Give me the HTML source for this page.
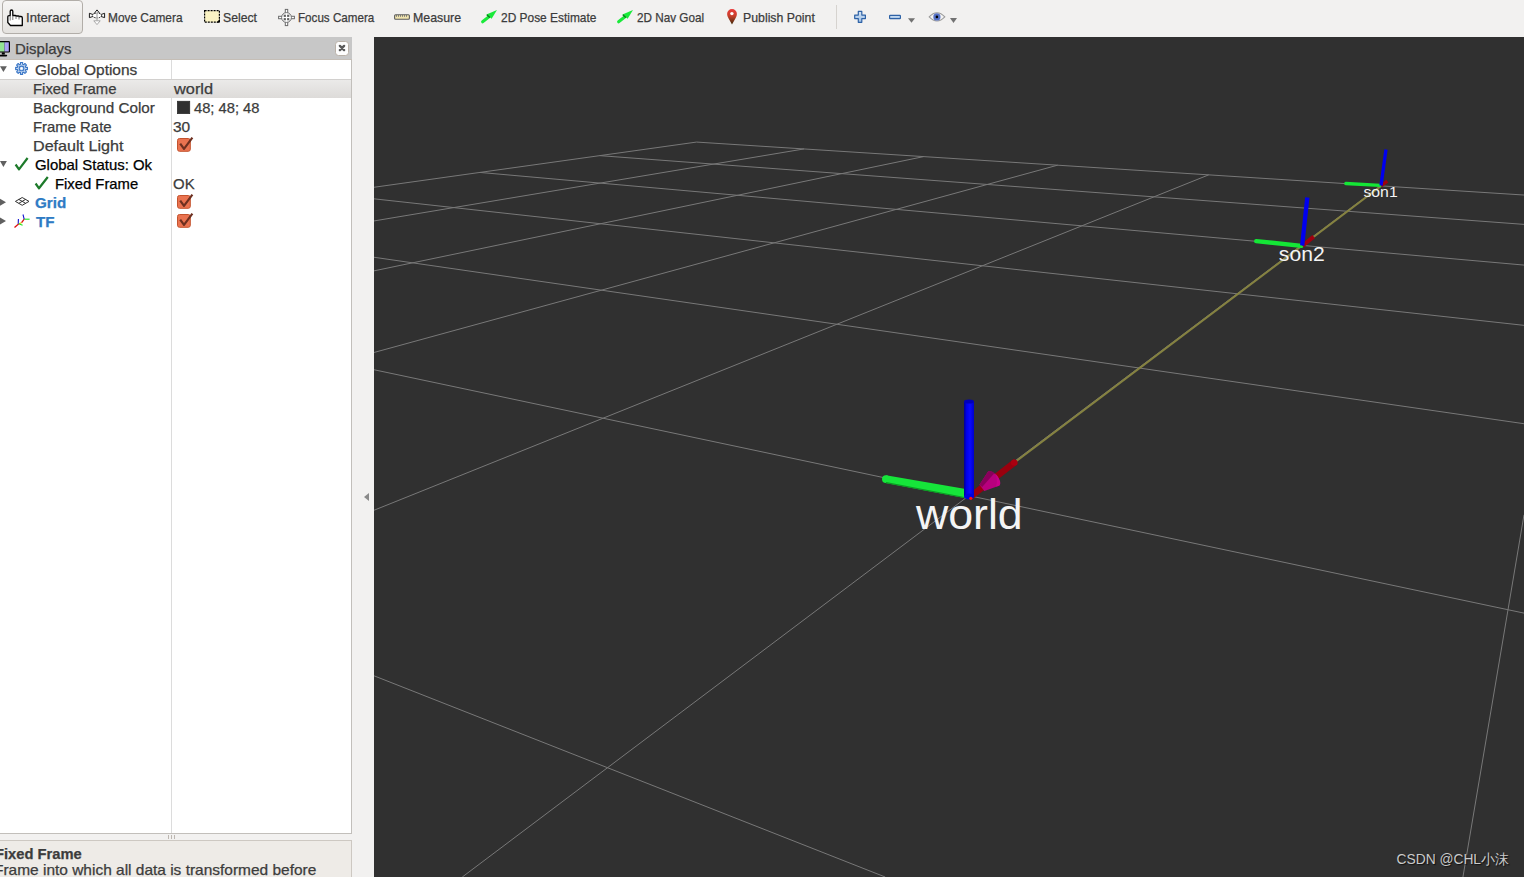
<!DOCTYPE html>
<html><head><meta charset="utf-8"><title>RViz</title>
<style>
*{margin:0;padding:0;box-sizing:border-box}
html,body{width:1524px;height:877px;overflow:hidden;background:#f2f1f0;font-family:"Liberation Sans",sans-serif;position:relative}
.t{position:absolute;white-space:nowrap;transform-origin:0 0;-webkit-text-stroke:0.25px currentColor}
#toolbar{position:absolute;left:0;top:0;width:1524px;height:37px;background:#f2f1f0}
.btn{position:absolute;left:2px;top:0;width:81px;height:34px;border:1px solid #b2aea9;border-radius:4px;background:linear-gradient(#f6f5f4,#e4e2df)}
.sep{position:absolute;left:836px;top:5px;width:1px;height:24px;background:#d6d3cf}
.ic{position:absolute}
#hdr{position:absolute;left:0;top:37px;width:352px;height:23px;background:#c7c7c7;border-bottom:1px solid #c5beb6}
#tree{position:absolute;left:0;top:60px;width:352px;height:774px;background:#fff;border-right:1px solid #c2bfbb;border-bottom:1px solid #c2bfbb}
#colsep{position:absolute;left:171px;top:60px;width:1px;height:773px;background:#dcdcdc}
#selrow{position:absolute;left:0;top:79px;width:351px;height:19px;background:linear-gradient(#ebeae9,#dddbd9);border-top:1px solid #d2d0ce}
#desc{position:absolute;left:-2px;top:840px;width:354px;height:40px;background:#eeebe7;border:1px solid #cdc8c2}
#split{position:absolute;left:364px;top:493px;width:0;height:0;border-top:4px solid transparent;border-bottom:4px solid transparent;border-right:5px solid #8a8a8a}
#view{position:absolute;left:374px;top:37px;width:1150px;height:840px;background:#303030;overflow:hidden}
#view svg{position:absolute;left:0;top:0}
</style></head><body>

<div id="toolbar">
<div class="btn"></div>
<svg class="ic" style="left:0;top:0" width="980" height="37" viewBox="0 0 980 37">
<defs>
<linearGradient id="pin" x1="0" x2="0" y1="0" y2="1"><stop offset="0" stop-color="#ea3a3a"/><stop offset="0.45" stop-color="#c8402c"/><stop offset="1" stop-color="#3e2808"/></linearGradient>
<linearGradient id="plusg" x1="0" x2="0" y1="0" y2="1"><stop offset="0" stop-color="#d6e6f6"/><stop offset="1" stop-color="#9ebfe4"/></linearGradient>
</defs>
<!-- hand -->
<path d="M10.5,25.5 L7.8,22.5 L7.8,16.8 Q7.8,15.6 9,15.6 L10.2,15.6 L10.2,11.2 Q10.2,10 11.6,10 Q12.8,10 12.8,11.2 L12.8,15.5 L15,15.5 Q16,15.5 16,16 L18.2,16 Q19,16 19,16.5 L21,16.5 Q22.3,16.5 22.3,17.8 L22.3,25.5 Z" fill="#fff" stroke="#000" stroke-width="1.3" stroke-linejoin="round"/>
<path d="M12.8,15.5 L12.8,20 M16,16 L16,19 M19,16.5 L19,19.5 M10.2,15.6 L10.2,20.5" stroke="#555" stroke-width="0.8"/>
<!-- move camera -->
<g stroke="#000" stroke-width="0.9" fill="#fff" stroke-linejoin="round">
<path d="M89.4,13.3 L93.2,14.6 L93.2,16.4 L89.4,17.6 Z"/>
<path d="M104.6,13.3 L100.8,14.6 L100.8,16.4 L104.6,17.6 Z"/>
<path d="M97,9.9 L100.2,14 L93.8,14 Z"/>
</g>
<ellipse cx="97" cy="15.5" rx="4.6" ry="2.4" fill="#fff" stroke="#000" stroke-width="0.9" stroke-dasharray="1.4 0.9"/>
<rect x="96.3" y="12.8" width="1.4" height="8" fill="#b4b4b4"/>
<path d="M93.8,20.8 L97,24.6 L100.2,20.8 Z" fill="#fff" stroke="#a0a0a0" stroke-width="0.9"/>
<!-- select -->
<rect x="204.6" y="10.6" width="14.8" height="11.6" fill="#fbf3c4" stroke="#000" stroke-width="1.2" stroke-dasharray="2 1"/>
<path d="M216.5,22.6 L220,19 L220,22.6 Z" fill="#000"/>
<!-- focus camera -->
<g fill="#fff" stroke="#6c6c6c" stroke-width="1">
<rect x="285.3" y="9.4" width="2.4" height="4.4"/>
<rect x="285.3" y="21.2" width="2.4" height="4.4"/>
<rect x="278.6" y="16.3" width="4.4" height="2.4"/>
<rect x="290" y="16.3" width="4.4" height="2.4"/>
<circle cx="286.5" cy="17.5" r="4.9"/>
</g>
<g fill="#606060"><rect x="283.7" y="14.7" width="2.2" height="2.2"/><rect x="287.1" y="14.7" width="2.2" height="2.2"/><rect x="283.7" y="18.1" width="2.2" height="2.2"/><rect x="287.1" y="18.1" width="2.2" height="2.2"/></g>
<!-- measure -->
<rect x="394.6" y="14.7" width="14.8" height="4.6" rx="1" fill="#f0e4ae" stroke="#5c5c5c" stroke-width="1.1"/>
<path d="M396.5,15 V16.8 M398.5,15 V16.8 M400.5,15 V16.8 M402.5,15 V16.8 M404.5,15 V16.8 M406.5,15 V16.8" stroke="#707070" stroke-width="0.9"/>
<!-- 2D pose / nav arrows -->
<g id="arr">
<line x1="482.6" y1="21.8" x2="489" y2="16.8" stroke="#1aea3a" stroke-width="3" stroke-linecap="round"/>
<path d="M486.4,14.4 L491.6,18.8 L497,10.1 Z" fill="#1aea3a"/>
<path d="M486.8,14.8 L489.8,17.6" stroke="#0b7a1c" stroke-width="1.3"/>
</g>
<use href="#arr" x="136"/>
<!-- publish point -->
<path d="M732,24.4 L728.6,18.6 Q727.1,16.6 727.1,14 A4.9,4.9 0 0 1 736.9,14 Q736.9,16.6 735.4,18.6 Z" fill="url(#pin)"/>
<circle cx="731.9" cy="13.6" r="1.7" fill="#fff"/>
<!-- separator handled by css -->
<!-- plus -->
<path d="M858.3,11.4 L861.8,11.4 L861.8,15.1 L865.4,15.1 L865.4,18.6 L861.8,18.6 L861.8,22.3 L858.3,22.3 L858.3,18.6 L854.7,18.6 L854.7,15.1 L858.3,15.1 Z" fill="url(#plusg)" stroke="#2e62a6" stroke-width="1.2" stroke-linejoin="round"/>
<!-- minus -->
<rect x="889.6" y="15.4" width="10.8" height="3.2" rx="0.6" fill="url(#plusg)" stroke="#2e62a6" stroke-width="1.2"/>
<path d="M908,18.2 L915,18.2 L911.5,22.8 Z" fill="#727272"/>
<!-- eye -->
<path d="M929.2,16.9 Q937,8.6 944.8,16.9 Q937,25 929.2,16.9 Z" fill="#f4f4f4" stroke="#9a9a9a" stroke-width="1.1"/>
<circle cx="936.9" cy="16.9" r="3.6" fill="#5470c4"/>
<circle cx="936.9" cy="16.9" r="1.3" fill="#000"/>
<path d="M950,18.1 L957,18.1 L953.5,22.9 Z" fill="#727272"/>
</svg>

<span class="t" style="left:26.02px;top:10.06px;font-size:12.8px;line-height:15px;color:#3c3c3c;transform:scaleX(1.0215);">Interact</span>
<span class="t" style="left:108.45px;top:10.06px;font-size:12.8px;line-height:15px;color:#3c3c3c;transform:scaleX(0.9274);">Move Camera</span>
<span class="t" style="left:223.45px;top:10.06px;font-size:12.8px;line-height:15px;color:#3c3c3c;transform:scaleX(0.9547);">Select</span>
<span class="t" style="left:298.07px;top:10.06px;font-size:12.8px;line-height:15px;color:#3c3c3c;transform:scaleX(0.9085);">Focus Camera</span>
<span class="t" style="left:413.01px;top:10.06px;font-size:12.8px;line-height:15px;color:#3c3c3c;transform:scaleX(0.9649);">Measure</span>
<span class="t" style="left:500.60px;top:10.06px;font-size:12.8px;line-height:15px;color:#3c3c3c;transform:scaleX(0.9320);">2D Pose Estimate</span>
<span class="t" style="left:636.71px;top:10.06px;font-size:12.8px;line-height:15px;color:#3c3c3c;transform:scaleX(0.9149);">2D Nav Goal</span>
<span class="t" style="left:743.31px;top:10.06px;font-size:12.8px;line-height:15px;color:#3c3c3c;transform:scaleX(0.9620);">Publish Point</span>
<div class="sep"></div>
</div>
<div id="hdr"></div><div id="tree"></div><div id="colsep"></div><div id="selrow"></div>
<svg class="ic" style="left:0;top:37px" width="200" height="200" viewBox="0 37 200 200">
<!-- monitor -->
<rect x="-1" y="41.1" width="11" height="11.4" rx="1.2" fill="#000"/>
<rect x="0" y="42.3" width="4.5" height="9.2" fill="#94e494"/>
<rect x="4.5" y="42.3" width="4.3" height="9.2" fill="#aaa0f4"/>
<rect x="1.8" y="52.4" width="3" height="2.2" fill="#000"/>
<path d="M-1,55.6 L6.4,55.6" stroke="#000" stroke-width="1.6" stroke-linecap="round"/>
<!-- expand triangles -->
<path d="M0,66.3 L6.9,66.3 L3.4,72 Z" fill="#606060"/>
<path d="M0,161 L6.9,161 L3.4,166.9 Z" fill="#606060"/>
<path d="M0,198.8 L6,202.3 L0,205.8 Z" fill="#606060"/>
<path d="M0,217.5 L6,221 L0,224.5 Z" fill="#606060"/>
<!-- gear -->
<g transform="translate(21.55,68.45)">
<path d="M-1.61,-3.99 L-1.04,-4.17 L-1.14,-5.89 L1.14,-5.89 L1.04,-4.17 L1.68,-3.96 L2.21,-3.69 L3.36,-4.97 L4.97,-3.36 L3.69,-2.21 L3.99,-1.61 L4.17,-1.04 L5.89,-1.14 L5.89,1.14 L4.17,1.04 L3.96,1.68 L3.69,2.21 L4.97,3.36 L3.36,4.97 L2.21,3.69 L1.61,3.99 L1.04,4.17 L1.14,5.89 L-1.14,5.89 L-1.04,4.17 L-1.68,3.96 L-2.21,3.69 L-3.36,4.97 L-4.97,3.36 L-3.69,2.21 L-3.99,1.61 L-4.17,1.04 L-5.89,1.14 L-5.89,-1.14 L-4.17,-1.04 L-3.96,-1.68 L-3.69,-2.21 L-4.97,-3.36 L-3.36,-4.97 L-2.21,-3.69 Z" fill="#c4d8f0" stroke="#3a76c6" stroke-width="1.1" stroke-linejoin="round"/>
<circle r="2.3" fill="none" stroke="#3a76c6" stroke-width="1.1"/>
<circle r="1.1" fill="#fff"/>
</g>
<!-- checks -->
<path d="M15.6,164.5 L19,169.3 L27.6,158" fill="none" stroke="#1d7a2a" stroke-width="2.2" stroke-linejoin="round"/>
<path d="M35.6,183.5 L39,188.3 L47.8,177" fill="none" stroke="#1d7a2a" stroke-width="2.2" stroke-linejoin="round"/>
<!-- grid icon -->
<g fill="none" stroke="#333" stroke-width="1">
<path d="M22.2,197.5 L29,201.4 L22.2,205.3 L15.4,201.4 Z"/>
<path d="M18.8,199.4 L25.6,203.3 M25.6,199.4 L18.8,203.3"/>
</g>
<!-- tf icon -->
<path d="M14.5,227.5 L18.8,223.8" stroke="#e01010" stroke-width="1.3"/>
<path d="M18.8,223.8 L21.6,222.6" stroke="#e0e020" stroke-width="1.3"/>
<path d="M21.6,222.6 L24.2,219.2" stroke="#e01010" stroke-width="1.3"/>
<path d="M24.2,219.2 L29.6,219.2" stroke="#20e020" stroke-width="1.1"/>
<path d="M24.2,219.2 L23,214.5" stroke="#1010d0" stroke-width="1.1"/>
<path d="M18.8,223.8 L22.6,225.2" stroke="#20e020" stroke-width="1.1"/>
<path d="M18.2,223.8 L18.4,219" stroke="#1010d0" stroke-width="1.1"/>
<!-- color swatch -->
<rect x="177.3" y="101.2" width="12.5" height="12.5" fill="#303030" stroke="#222" stroke-width="0.6"/>
<!-- checkboxes -->
<g id="cb">
<rect x="177.5" y="138.5" width="12.8" height="12.8" rx="2" fill="#ea7350" stroke="#c4532e" stroke-width="1"/>
<path d="M180.2,143.6 L184,148.8 L192.4,137.6" fill="none" stroke="#6e3020" stroke-width="2.2" stroke-linejoin="round"/>
</g>
<use href="#cb" y="57"/>
<use href="#cb" y="76"/>
</svg>
<div style="position:absolute;left:335px;top:41px;width:13.6px;height:14.6px;border:1px solid #b9b1a8;border-radius:3.5px;background:#fdfdfd"></div>
<svg class="ic" style="left:335px;top:41px" width="14" height="15" viewBox="0 0 14 15"><path d="M4.9,4.9 L9.1,9.1 M9.1,4.9 L4.9,9.1" stroke="#5a5a5a" stroke-width="2.4" stroke-linecap="round"/></svg>

<span class="t" style="left:15.30px;top:41.48px;font-size:14.5px;line-height:17px;color:#3c3c3c;transform:scaleX(1.0312);">Displays</span>
<span class="t" style="left:35.33px;top:62.28px;font-size:14.5px;line-height:17px;color:#3c3c3c;transform:scaleX(1.0667);">Global Options</span>
<span class="t" style="left:33.11px;top:81.28px;font-size:14.5px;line-height:17px;color:#3c3c3c;transform:scaleX(1.0247);">Fixed Frame</span>
<span class="t" style="left:174.10px;top:81.28px;font-size:14.5px;line-height:17px;color:#3c3c3c;transform:scaleX(1.1272);">world</span>
<span class="t" style="left:33.08px;top:100.28px;font-size:14.5px;line-height:17px;color:#3c3c3c;transform:scaleX(1.0504);">Background Color</span>
<span class="t" style="left:193.91px;top:100.28px;font-size:14.5px;line-height:17px;color:#3c3c3c;transform:scaleX(1.0144);">48; 48; 48</span>
<span class="t" style="left:33.11px;top:119.28px;font-size:14.5px;line-height:17px;color:#3c3c3c;transform:scaleX(1.0261);">Frame Rate</span>
<span class="t" style="left:173.48px;top:119.28px;font-size:14.5px;line-height:17px;color:#3c3c3c;transform:scaleX(1.0661);">30</span>
<span class="t" style="left:33.01px;top:138.28px;font-size:14.5px;line-height:17px;color:#3c3c3c;transform:scaleX(1.1109);">Default Light</span>
<span class="t" style="left:35.35px;top:157.28px;font-size:14.5px;line-height:17px;color:#000000;transform:scaleX(1.0303);">Global Status: Ok</span>
<span class="t" style="left:55.01px;top:176.28px;font-size:14.5px;line-height:17px;color:#000000;transform:scaleX(1.0222);">Fixed Frame</span>
<span class="t" style="left:173.43px;top:176.28px;font-size:14.5px;line-height:17px;color:#3c3c3c;transform:scaleX(1.0320);">OK</span>
<span class="t" style="left:35.49px;top:195.28px;font-size:14.5px;line-height:17px;color:#2f7bc4;font-weight:bold;transform:scaleX(1.0469);">Grid</span>
<span class="t" style="left:35.95px;top:214.28px;font-size:14.5px;line-height:17px;color:#2f7bc4;font-weight:bold;transform:scaleX(1.0448);">TF</span>
<div id="desc"></div>
<span class="t" style="left:-5.26px;top:845.68px;font-size:14.5px;line-height:17px;color:#3c3c3c;font-weight:bold;transform:scaleX(1.0148);">Fixed Frame</span>
<span class="t" style="left:-5.54px;top:862.38px;font-size:14.5px;line-height:17px;color:#3c3c3c;transform:scaleX(1.0664);">Frame into which all data is transformed before</span>
<div id="split"></div>
<div style="position:absolute;left:168px;top:835px;width:1px;height:4px;background:#bdb7b1"></div><div style="position:absolute;left:171px;top:835px;width:1px;height:4px;background:#bdb7b1"></div><div style="position:absolute;left:174px;top:835px;width:1px;height:4px;background:#bdb7b1"></div>
<div id="view"><svg width="1150" height="840" viewBox="0 0 1150 840">
<g stroke="#787878" stroke-width="1" fill="none">
<line x1="511.20" y1="840.00" x2="0.00" y2="638.80"/>
<line x1="1088.94" y1="840.00" x2="1150.00" y2="477.84"/>
<line x1="1150.00" y1="576.12" x2="0.00" y2="332.74"/>
<line x1="88.31" y1="840.00" x2="1006.45" y2="148.85"/>
<line x1="1150.00" y1="386.73" x2="0.00" y2="220.25"/>
<line x1="0.00" y1="473.25" x2="834.72" y2="137.85"/>
<line x1="1150.00" y1="288.35" x2="0.00" y2="161.82"/>
<line x1="0.00" y1="315.49" x2="683.60" y2="128.18"/>
<line x1="1150.00" y1="228.08" x2="105.93" y2="135.43"/>
<line x1="0.00" y1="233.85" x2="549.61" y2="119.60"/>
<line x1="1150.00" y1="187.38" x2="225.72" y2="118.63"/>
<line x1="0.00" y1="183.94" x2="429.98" y2="111.95"/>
<line x1="1150.00" y1="158.04" x2="322.52" y2="105.07"/>
<line x1="0.00" y1="150.27" x2="322.52" y2="105.07"/>
</g>
<defs>
<linearGradient id="gb" x1="0" x2="1" y1="0" y2="0"><stop offset="0" stop-color="#000090"/><stop offset="0.25" stop-color="#0000e8"/><stop offset="0.6" stop-color="#0a0aff"/><stop offset="1" stop-color="#0000c8"/></linearGradient>
<linearGradient id="gg" x1="0" x2="0" y1="0" y2="1"><stop offset="0" stop-color="#22ee44"/><stop offset="0.6" stop-color="#14e23a"/><stop offset="1" stop-color="#0a7a1c"/></linearGradient>
</defs>
<!-- yellow tf link world->son1 -->
<line x1="641.8" y1="424.5" x2="1007" y2="149" stroke="#858240" stroke-width="2.1"/>
<!-- world frame -->
<polygon points="511.9,438.2 594.6,452.5 593.4,461.5 511.6,446" fill="#16e53a"/>
<circle cx="511.9" cy="442.1" r="3.9" fill="#16e53a"/>
<line x1="512" y1="445.6" x2="593" y2="461" stroke="#0c9a24" stroke-width="1.2"/>
<line x1="596" y1="460" x2="641.8" y2="424.5" stroke="#99000e" stroke-width="6.5"/>
<ellipse cx="640.3" cy="425.6" rx="3.3" ry="3.2" fill="#aa0010"/>
<path d="M605.45,447.64 L614.1,434.6 A9 4.5 52.2 0 1 625.1,448.8 L610.35,453.96 Z" fill="#b8007e"/>
<path d="M605.45,447.64 L614.1,434.6 A9 4.5 52.2 0 1 620.5,436 L608.2,450 Z" fill="#8a005c"/>
<path d="M620.5,436 A9 4.5 52.2 0 1 625.1,448.8 L622,449.6 Q624.6,442 620.5,436 Z" fill="#c8008a"/>
<rect x="590" y="364.5" width="10" height="95" fill="url(#gb)"/>
<ellipse cx="595" cy="364.5" rx="5" ry="2" fill="#0000b8"/>
<ellipse cx="595" cy="459.5" rx="5" ry="3" fill="#0000e0"/>
<circle cx="596.8" cy="461.3" r="1.6" fill="#ff1010"/>
<!-- son2 -->
<line x1="882.2" y1="204.1" x2="927.5" y2="208.8" stroke="#14e636" stroke-width="4.3" stroke-linecap="round"/>
<line x1="928.5" y1="208.8" x2="939.7" y2="199.6" stroke="#a0000f" stroke-width="4"/>
<line x1="928.2" y1="208.5" x2="933.3" y2="160.6" stroke="#0000ee" stroke-width="4.3"/>
<!-- son1 -->
<line x1="971.8" y1="146.5" x2="1006" y2="148.4" stroke="#14e636" stroke-width="3.3" stroke-linecap="round"/>
<line x1="1007" y1="148.8" x2="1013.3" y2="144.1" stroke="#a0000f" stroke-width="3.2"/>
<line x1="1007" y1="148.6" x2="1012" y2="112.5" stroke="#0000ee" stroke-width="3.3"/>
<g font-family="Liberation Sans, sans-serif" fill="#f4f4f4">
<text transform="translate(541.9,492) scale(1.029,1)" font-size="43.45">world</text>
<text transform="translate(904.87,224) scale(1.05,1)" font-size="20.14">son2</text>
<text transform="translate(989.43,160.4) scale(1.038,1)" font-size="15.22">son1</text>
</g>

</svg></div>
<div class="t" style="left:1396.5px;top:852px;font-size:13.8px;line-height:16px;color:#cacaca;-webkit-text-stroke:0;text-shadow:1px 1px 1px #111">CSDN @CHL小沫</div>
</body></html>
